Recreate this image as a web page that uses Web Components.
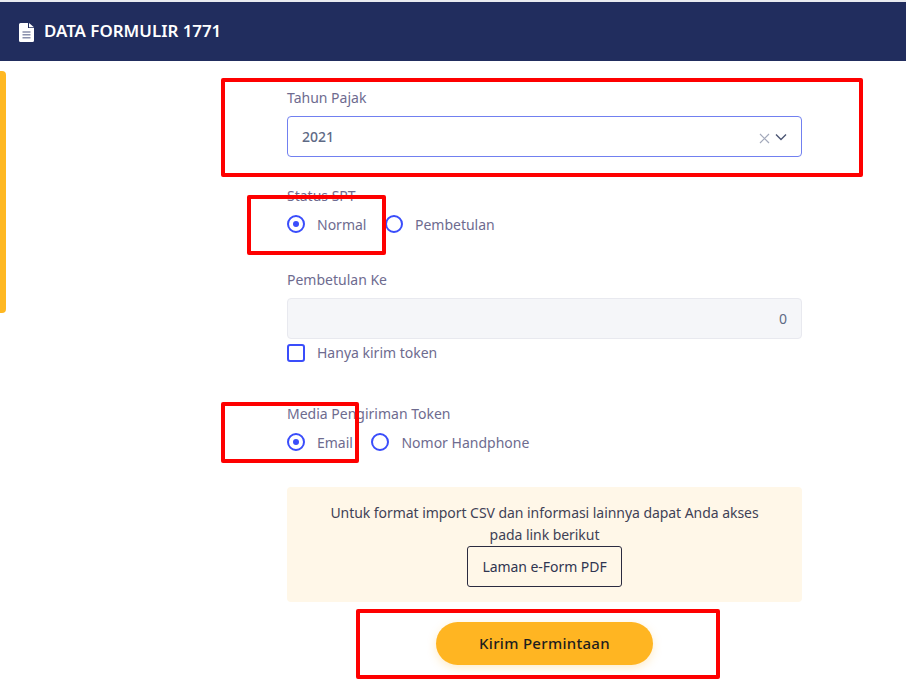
<!DOCTYPE html>
<html lang="id"><head><meta charset="utf-8"><title>Data Formulir 1771</title>
<style>
html,body{margin:0;padding:0;background:#fff;height:687px;overflow:hidden}
body{font-family:"Noto Sans","Open Sans",sans-serif;font-size:14px;position:relative}
</style></head><body>
<app-page></app-page>
<script>
function def(name,css,html){
  customElements.define(name,class extends HTMLElement{
    constructor(){super();const r=this.attachShadow({mode:'open'});
      r.innerHTML='<style>'+css+'</style>'+html;}
  });
}
def('page-header',`:host{display:flex;align-items:center;gap:10px;height:59px;background:#212d5e;color:#fff;padding:0 19px;box-sizing:border-box;font-weight:600;font-size:16.900px}
svg{display:block;width:15px;height:19px;margin-top:2px}span{padding-bottom:2px}`,
`<svg viewBox="0 0 15 19"><path fill="#fff" d="M0 1.500A1.500 1.500 0 0 1 1.500 0H9v5h6v12.500a1.500 1.500 0 0 1-1.500 1.500h-12A1.500 1.500 0 0 1 0 17.500z"/><path fill="#fff" d="M10 0l5 4.200h-5z"/><path fill="#8a90ac" d="M3.500 8.300h8v1.500h-8zM3.500 11.100h8v1.500h-8zM3.500 13.900h8v1.500h-8z"/></svg><span><slot></slot></span>`);
def('field-label',`:host{display:block;color:#6e6b8f;font-size:14px;line-height:20px}`,`<slot></slot>`);
def('select-box',`:host{display:flex;align-items:center;height:41px;box-sizing:border-box;border:1px solid #7180f0;border-radius:4px;padding:0 14px;color:#5e6a85;font-weight:500;font-size:14px;margin-top:8px}
.v{flex:1}svg{display:block}.x{margin-right:5px;margin-top:3px}`,
`<span class="v"><slot></slot></span><svg class="x" width="11" height="11" viewBox="0 0 11 11"><path d="M1 1l9 9M10 1l-9 9" stroke="#a3a9bb" stroke-width="1.200" fill="none"/></svg><svg width="12" height="8" viewBox="0 0 12 8"><path d="M1 1.500l5 5 5-5" stroke="#4c5674" stroke-width="1.400" fill="none"/></svg>`);
def('radio-opt',`:host{display:inline-flex;align-items:center;height:20px;gap:12px;color:#6e6b8f;font-size:14px}
i{display:flex;align-items:center;justify-content:center;width:18px;height:18px;box-sizing:border-box;border:2px solid #3a4dfb;border-radius:50%}
b{width:6px;height:6px;border-radius:50%;background:#3a4dfb;display:none}
span{padding-top:2px;line-height:18px}
:host([checked]) b{display:block}`,`<i><b></b></i><span><slot></slot></span>`);
def('check-opt',`:host{display:flex;align-items:center;gap:12px;color:#6e6b8f;font-size:14px;line-height:20px}
i{width:18px;height:18px;box-sizing:border-box;border:2px solid #3a4dfb;border-radius:3px}`,`<i></i><span><slot></slot></span>`);
def('num-input',`:host{display:flex;align-items:center;justify-content:flex-end;height:41px;box-sizing:border-box;background:#f5f6f9;border:1px solid #e8e9ef;border-radius:4px;padding:0 14px;color:#5e6a85;font-size:14px;margin-top:8px}`,`<slot></slot>`);
def('info-box',`:host{display:flex;flex-direction:column;align-items:center;background:#fff7e8;border-radius:4px;height:115px;box-sizing:border-box;padding:15px 40px 0;text-align:center;color:#3f4256;font-size:14px;line-height:22px;letter-spacing:-.05px}
a{display:block;border:1px solid #2b2b40;border-radius:3px;height:41px;box-sizing:border-box;width:155px;line-height:39px;color:#2f3550;text-decoration:none}`,
`<div><slot></slot></div><a href="#">Laman e-Form PDF</a>`);
def('send-button',`:host{display:block;width:217px;height:43px;line-height:43px;border-radius:22px;background:#ffb522;color:#1e1e1e;font-weight:500;font-size:15px;letter-spacing:.3px;text-align:center;box-shadow:0 3px 10px rgba(255,181,34,.25)}`,`<slot></slot>`);
def('mark-box',`:host{position:absolute;display:block;box-sizing:border-box;border:4px solid #fe0000;border-radius:2px;pointer-events:none}`,``);
def('form-panel',`:host{display:block;width:515px;margin-left:287px}
.a{padding-top:27px}.b{margin-top:29px}.c{margin-top:36px}.d{margin-top:41px}.e{margin-top:4px}
.r{display:flex;gap:18.500px;margin-top:8px}
.btn{display:flex;justify-content:center;margin-top:20px}`,
`<div class="a"><field-label>Tahun Pajak</field-label><select-box>2021</select-box></div>
<div class="b"><field-label>Status SPT</field-label><div class="r"><radio-opt checked>Normal</radio-opt><radio-opt>Pembetulan</radio-opt></div></div>
<div class="c"><field-label>Pembetulan Ke</field-label><num-input>0</num-input><check-opt class="e">Hanya kirim token</check-opt></div>
<div class="d"><field-label>Media Pengiriman Token</field-label><div class="r"><radio-opt checked>Email</radio-opt><radio-opt>Nomor Handphone</radio-opt></div></div>
<info-box style="margin-top:35px">Untuk format import CSV dan informasi lainnya dapat Anda akses pada link berikut</info-box>
<div class="btn"><send-button>Kirim Permintaan</send-button></div>`);
def('app-page',`:host{display:block;position:relative;height:687px;background:#fff}
.strip{background:#e8eaf0;height:2px}
.side{position:absolute;left:0;top:71px;width:6px;height:242px;background:#ffb822;border-radius:0 4px 4px 0}
.m1{left:221px;top:78px;width:642px;height:99px}.m2{left:247px;top:195px;width:139px;height:60px}
.m3{left:221px;top:402px;width:138px;height:61px}.m4{left:356px;top:609px;width:364px;height:70px}`,
`<div class="strip"></div><page-header>DATA FORMULIR 1771</page-header><div class="side"></div><form-panel></form-panel>
<mark-box class="m1"></mark-box><mark-box class="m2"></mark-box><mark-box class="m3"></mark-box><mark-box class="m4"></mark-box>`);
</script>
</body></html>
